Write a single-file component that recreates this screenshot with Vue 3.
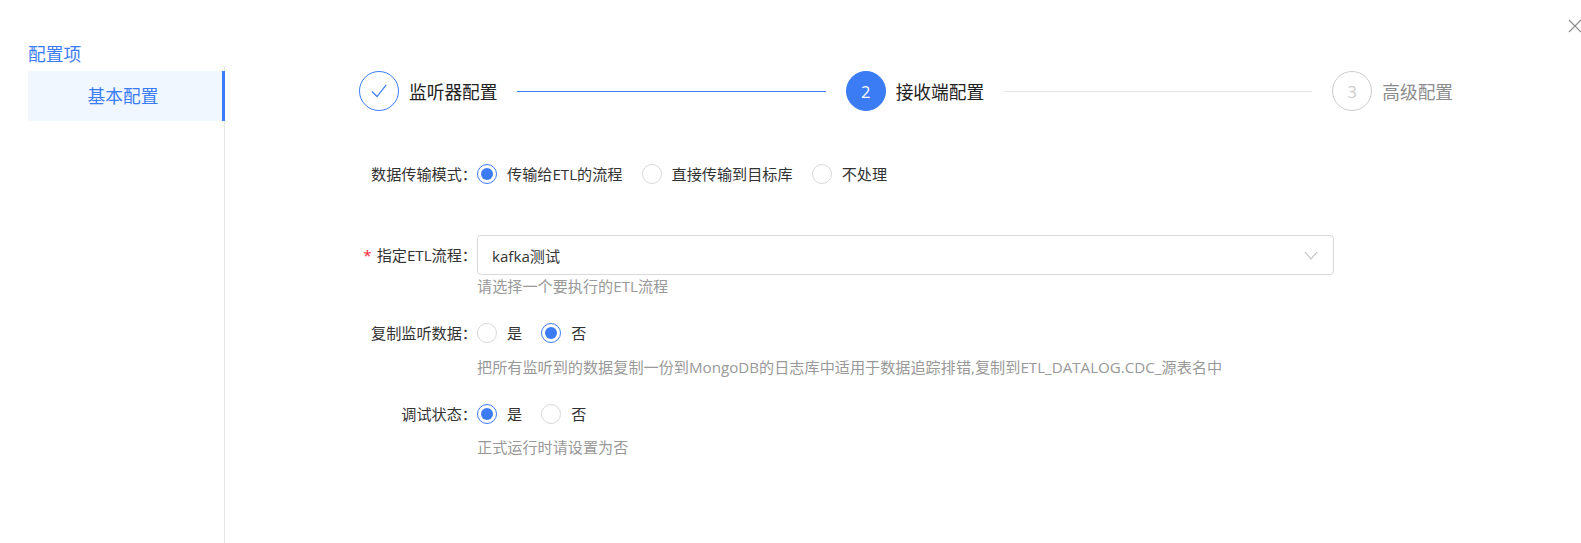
<template>
  <div class="page">
    <aside class="sidebar">
      <div class="sidebar-title">配置项</div>
      <div class="menu">
        <div class="menu-item">基本配置</div>
      </div>
    </aside>

    <main class="content">
      <div class="steps">
        <div class="step done">
          <span class="step-icon">
            <svg width="18" height="18" viewBox="0 0 18 18" fill="none">
              <path d="M2 9.5 L7 14.5 L16.2 2.8" stroke="#3b7cf5" stroke-width="1.2" />
            </svg>
          </span>
          <span class="step-title">监听器配置</span>
          <span class="step-line line-active"></span>
        </div>
        <div class="step active">
          <span class="step-icon">2</span>
          <span class="step-title">接收端配置</span>
          <span class="step-line"></span>
        </div>
        <div class="step waiting">
          <span class="step-icon">3</span>
          <span class="step-title">高级配置</span>
        </div>
      </div>

      <form class="form" @submit.prevent>
        <div class="form-row row-mode">
          <label class="form-label">数据传输模式：</label>
          <div class="radio-group">
            <span v-for="item in modes" :key="item" class="radio" @click="mode = item">
              <span class="radio-dot" :class="{ checked: mode === item }"></span>
              {{ item }}
            </span>
          </div>
        </div>

        <div class="form-row row-etl">
          <label class="form-label"><span class="required">*</span>指定ETL流程：</label>
          <div class="select">
            <span>kafka测试</span>
            <svg width="14" height="9" viewBox="0 0 14 9" fill="none">
              <path d="M1 1 L7 8 L13 1" stroke="#bfbfbf" stroke-width="1.1" />
            </svg>
          </div>
        </div>
        <div class="hint hint-etl">请选择一个要执行的ETL流程</div>

        <div class="form-row row-copy">
          <label class="form-label">复制监听数据：</label>
          <div class="radio-group">
            <span v-for="item in yesNo" :key="item" class="radio" @click="copyData = item">
              <span class="radio-dot" :class="{ checked: copyData === item }"></span>
              {{ item }}
            </span>
          </div>
        </div>
        <div class="hint">把所有监听到的数据复制一份到MongoDB的日志库中适用于数据追踪排错,复制到ETL_DATALOG.CDC_源表名中</div>

        <div class="form-row row-debug">
          <label class="form-label">调试状态：</label>
          <div class="radio-group">
            <span v-for="item in yesNo" :key="item" class="radio" @click="debug = item">
              <span class="radio-dot" :class="{ checked: debug === item }"></span>
              {{ item }}
            </span>
          </div>
        </div>
        <div class="hint hint-debug">正式运行时请设置为否</div>
      </form>
    </main>

    <svg class="close" width="14" height="14" viewBox="0 0 14 14" fill="none">
      <path d="M1 1 L13 13 M13 1 L1 13" stroke="#8c8c8c" stroke-width="1.2" />
    </svg>
  </div>
</template>

<script setup>
import { ref } from 'vue';

const modes = ['传输给ETL的流程', '直接传输到目标库', '不处理'];
const yesNo = ['是', '否'];

const mode = ref('传输给ETL的流程');
const copyData = ref('否');
const debug = ref('是');
</script>

<style scoped>
.page {
  position: relative;
  display: flex;
  height: 543px;
  overflow: hidden;
  background: #fff;
  color: #333;
  font-family: "Open Sans", "Noto Sans CJK SC", sans-serif;
  font-size: 15.15px;
}

.sidebar {
  display: flex;
  flex-direction: column;
  width: 225px;
  flex-shrink: 0;
  padding-left: 28px;
  box-sizing: border-box;
}

.sidebar-title {
  height: 22px;
  margin-top: 43px;
  margin-bottom: 1px;
  line-height: 22px;
  font-size: 17.7px;
  color: #3b7cf5;
}

.menu {
  flex: 1;
  padding-top: 5px;
  border-right: 1px solid #e6e6e6;
}

.menu-item {
  height: 50px;
  margin-right: -1px;
  padding-right: 4px;
  line-height: 50px;
  text-align: center;
  font-size: 17.7px;
  color: #3b7cf5;
  background-color: #f0f7ff;
  border-right: 3px solid #3b7cf5;
}

.content {
  flex: 1;
  padding-left: 134px;
}

.steps {
  display: flex;
  width: 1094px;
  margin-top: 71px;
}

.step {
  display: flex;
  align-items: center;
  flex: 1;
  height: 40px;
}

.step.waiting {
  flex: none;
}

.step-icon {
  display: flex;
  align-items: center;
  justify-content: center;
  width: 40px;
  height: 40px;
  flex-shrink: 0;
  box-sizing: border-box;
  border-radius: 50%;
  border: 1px solid #3b7cf5;
  font-size: 16.5px;
}

.step-title {
  margin-left: 10px;
  font-size: 17.7px;
  color: #222;
  white-space: nowrap;
}

.step-line {
  flex: 1;
  height: 1px;
  margin: 0 20px;
  background-color: #e6e6e6;
}

.line-active {
  background-color: #3b7cf5;
}

.active .step-icon {
  background-color: #3b7cf5;
  color: #fff;
}

.waiting .step-icon {
  border-color: #ccc;
  color: #ccc;
}

.waiting .step-title {
  color: #8c8c8c;
}

.form-row {
  display: flex;
  align-items: center;
}

.form-label {
  width: 118px;
  flex-shrink: 0;
  line-height: 22px;
  text-align: right;
  white-space: nowrap;
}

.required {
  margin-right: 5px;
  color: #f5222d;
}

.row-mode {
  margin-top: 52px;
}

.row-etl {
  margin-top: 50px;
}

.row-copy {
  margin-top: 25px;
}

.row-debug {
  margin-top: 25px;
}

.radio-group {
  display: flex;
  gap: 19px;
}

.radio {
  display: flex;
  align-items: center;
  gap: 10px;
  line-height: 22px;
  cursor: pointer;
}

.radio-dot {
  display: flex;
  align-items: center;
  justify-content: center;
  width: 20px;
  height: 20px;
  box-sizing: border-box;
  border: 1px solid #d9d9d9;
  border-radius: 50%;
}

.radio-dot.checked {
  border-color: #3b7cf5;
}

.radio-dot.checked::after {
  content: '';
  width: 12px;
  height: 12px;
  border-radius: 50%;
  background-color: #3b7cf5;
}

.select {
  display: flex;
  align-items: center;
  justify-content: space-between;
  width: 857px;
  height: 40px;
  padding: 0 15px 0 14px;
  box-sizing: border-box;
  border: 1px solid #d9d9d9;
  border-radius: 4px;
}

.hint {
  margin-top: 12px;
  margin-left: 118px;
  line-height: 22px;
  color: #999;
}

.hint-etl {
  margin-top: 0;
}

.hint-debug {
  margin-top: 11px;
}

.close {
  position: absolute;
  top: 19px;
  right: -1px;
}
</style>
